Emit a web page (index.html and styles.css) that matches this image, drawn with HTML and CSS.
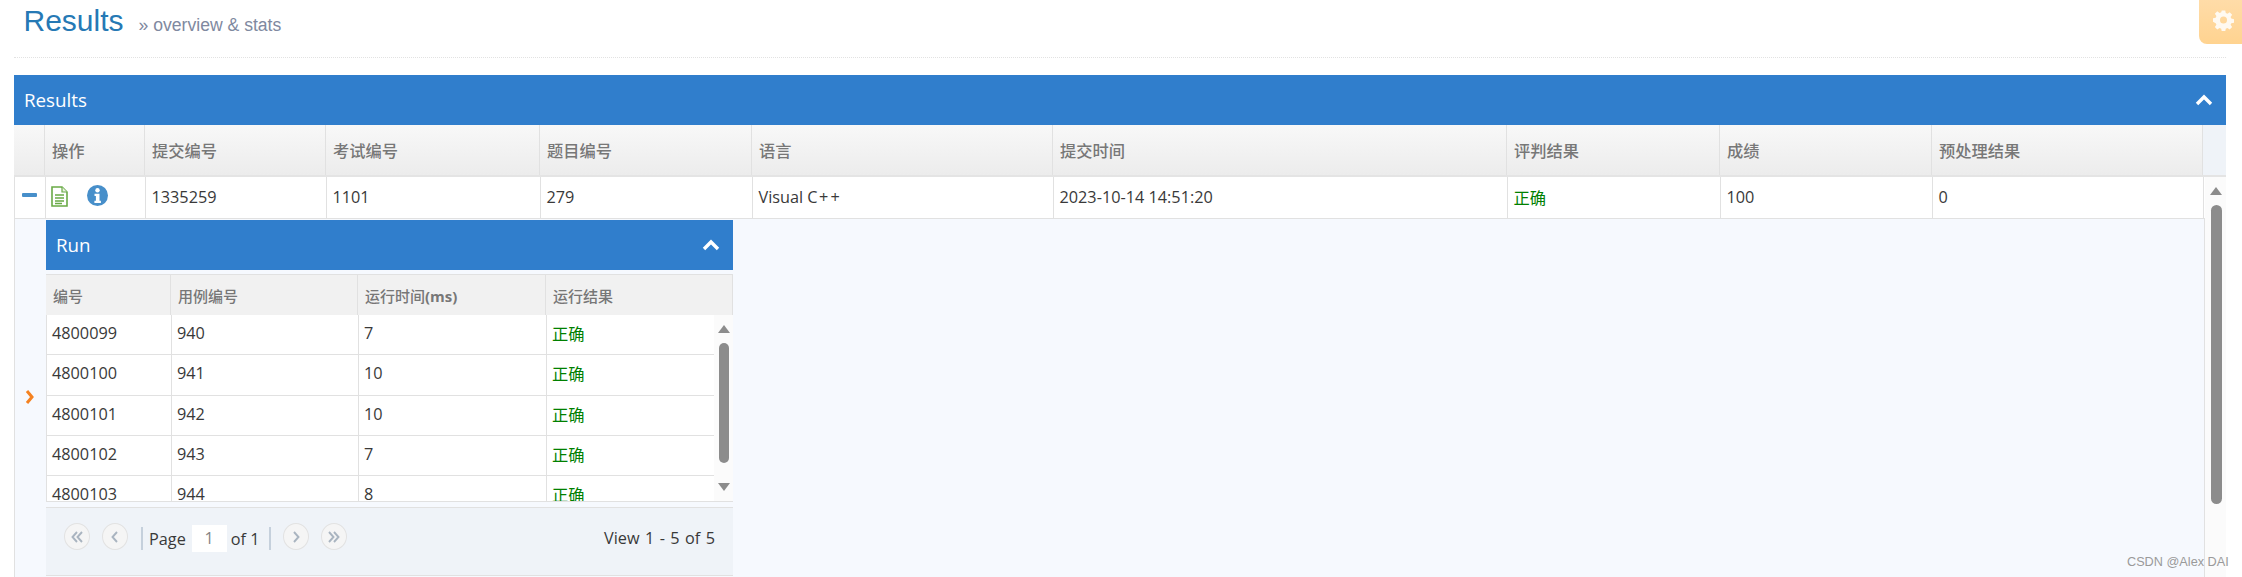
FILE: index.html
```html
<!DOCTYPE html>
<html lang="zh">
<head>
<meta charset="utf-8">
<title>Results</title>
<link rel="stylesheet" href="styles.css">
</head>
<body>
<div class="page">
  <div class="page-header">
    <h1>Results</h1>
    <small>» overview &amp; stats</small>
  </div>
  <div class="widget">
    <div class="bar main-bar">
      <span>Results</span>
      <svg class="up" viewBox="0 0 18 12"><path d="M2 10 9 3l7 7" fill="none" stroke="#fff" stroke-width="3.4"/></svg>
    </div>
    <div class="grid-head main-cols">
      <div></div><div>操作</div><div>提交编号</div><div>考试编号</div><div>题目编号</div><div>语言</div><div>提交时间</div><div>评判结果</div><div>成绩</div><div>预处理结果</div><div></div>
    </div>
    <div class="main-body">
      <div class="main-rows">
        <div class="grid-row body-cols">
          <div class="toggle"><span class="minus"></span></div>
          <div class="actions">
            <svg class="file" viewBox="0 0 17 21"><path d="M1 1h10l5 5v14H1z" fill="#fff" stroke="#69aa46" stroke-width="1.6"/><path d="M11 1v5h5" fill="#e8f3df" stroke="#69aa46" stroke-width="1.2"/><path d="M4 9h9M4 12h9M4 15h9M4 17.5h7" stroke="#69aa46" stroke-width="1.5"/></svg>
            <svg class="info" viewBox="0 0 21 21"><circle cx="10.5" cy="10.5" r="10.5" fill="#478fca"/><circle cx="10.5" cy="5.2" r="2.2" fill="#fff"/><path d="M7.5 8.7h5v7h1.4v2.2H7.4v-2.2h1.5v-4.8H7.5z" fill="#fff"/></svg>
          </div>
          <div>1335259</div><div>1101</div><div>279</div><div>Visual C<span class="pp">++</span></div><div>2023-10-14 14:51:20</div><div class="ok">正确</div><div>100</div><div>0</div>
        </div>
        <div class="expanded">
          <div class="marker">
            <svg viewBox="0 0 10 16"><path d="M2 2l5 6-5 6" fill="none" stroke="#f58220" stroke-width="3"/></svg>
          </div>
          <div class="detail">
            <div class="bar sub-bar">
              <span>Run</span>
              <svg class="up" viewBox="0 0 18 12"><path d="M2 10 9 3l7 7" fill="none" stroke="#fff" stroke-width="3.4"/></svg>
            </div>
            <div class="grid-head sub-head sub-head-cols">
              <div>编号</div><div>用例编号</div><div><span>运行时间<b class="unit">(ms)</b></span></div><div>运行结果</div>
            </div>
            <div class="sub-body">
              <div class="sub-rows">
                <div class="grid-row sub-row sub-cols"><div>4800099</div><div>940</div><div>7</div><div class="ok">正确</div></div>
                <div class="grid-row sub-row sub-cols"><div>4800100</div><div>941</div><div>10</div><div class="ok">正确</div></div>
                <div class="grid-row sub-row sub-cols"><div>4800101</div><div>942</div><div>10</div><div class="ok">正确</div></div>
                <div class="grid-row sub-row sub-cols"><div>4800102</div><div>943</div><div>7</div><div class="ok">正确</div></div>
                <div class="grid-row sub-row sub-cols"><div>4800103</div><div>944</div><div>8</div><div class="ok">正确</div></div>
              </div>
              <div class="scroll sub-scroll">
                <i class="arrow-up"></i><i class="thumb"></i><i class="arrow-down"></i>
              </div>
            </div>
            <div class="pager">
              <div class="pager-left">
                <button class="pg" type="button"><svg viewBox="0 0 14 14"><path d="M7 2 2.500 7 7 12M12 2 7.500 7 12 12" fill="none" stroke="#a9b4c0" stroke-width="1.9"/></svg></button>
                <button class="pg" type="button"><svg viewBox="0 0 14 14"><path d="M9 2 4.500 7 9 12" fill="none" stroke="#a9b4c0" stroke-width="1.9"/></svg></button>
                <span class="sep"></span>
                <span class="pg-label">Page</span>
                <span class="pg-input">1</span>
                <span class="pg-label">of 1</span>
                <span class="sep sep-r"></span>
                <button class="pg" type="button"><svg viewBox="0 0 14 14"><path d="M5 2l4.500 5L5 12" fill="none" stroke="#a9b4c0" stroke-width="1.9"/></svg></button>
                <button class="pg" type="button"><svg viewBox="0 0 14 14"><path d="M2 2l4.500 5L2 12M7 2l4.500 5L7 12" fill="none" stroke="#a9b4c0" stroke-width="1.9"/></svg></button>
              </div>
              <div class="pager-right">View 1 - 5 of 5</div>
            </div>
          </div>
        </div>
      </div>
      <div class="scroll main-scroll">
        <i class="arrow-up"></i><i class="thumb"></i>
      </div>
    </div>
  </div>
</div>
<div class="settings">
  <svg viewBox="0 0 24 24"><path fill="#fff" fill-opacity=".85" fill-rule="evenodd" d="M10 1h4l.6 3.100 1.900.8 2.600-1.800 2.800 2.800-1.800 2.600.8 1.900 3.100.6v4l-3.100.6-.8 1.900 1.800 2.600-2.800 2.800-2.600-1.800-1.900.8-.6 3.100h-4l-.6-3.100-1.900-.8-2.600 1.800-2.800-2.800 1.800-2.600-.8-1.900L0 14v-4l3.100-.6.8-1.900L2.100 4.900l2.800-2.800 2.600 1.800 1.900-.8zM12 8a4 4 0 1 0 0 8 4 4 0 0 0 0-8z"/></svg>
</div>
<div class="watermark">CSDN @Alex DAI</div>
</body>
</html>
```
FILE: styles.css
```css
* { box-sizing: border-box; }
html, body { margin: 0; height: 577px; overflow: hidden; background: #fff; }
body {
  font-family: "Open Sans", "Noto Sans CJK SC", sans-serif;
  font-size: 16.25px;
  color: #393939;
  position: relative;
}
.page { padding: 0 16px 0 14px; }
.page-header {
  height: 58px;
  margin-bottom: 17px;
  padding: 0 0 0 9.5px;
  border-bottom: 1px dotted #e2e2e2;
  display: flex;
  align-items: baseline;
  font-family: "Liberation Sans", Arial, sans-serif;
}
h1 {
  margin: 0;
  font-size: 30px;
  font-weight: 400;
  line-height: 41px;
  color: #2679b5;
}
small {
  margin-left: 15px;
  font-size: 17.6px;
  color: #8089a0;
}
.bar {
  background: #307ecc;
  color: #fff;
  height: 50px;
  font-size: 18.75px;
  display: flex;
  align-items: center;
  justify-content: space-between;
  flex: none;
}
.bar span { margin-top: -2px; }
.main-bar { padding: 0 13px 0 10px; }
.sub-bar { padding: 0 13px 0 10px; }
.up { width: 18px; height: 12px; }
.grid-head { display: grid; color: #777; font-weight: 500; }
.unit { font-weight: 700; }
.main-cols {
  grid-template-columns: 31px 100px 181px 214px 212px 301px 454px 213px 212px 271px 23px;
  height: 52px;
  background: linear-gradient(#f8f8f8, #ececec);
  border-bottom: 2px solid #e4e4e4;
}
.main-cols > div {
  border-right: 1px solid #e1e1e1;
  padding-left: 7px;
  display: flex;
  align-items: center;
}
.main-cols > div:last-child { border-right: 0; background: #eff3f8; }
.body-cols { grid-template-columns: 32px 100px 181px 214px 212px 301px 454px 213px 212px 271px; }
.grid-row { display: grid; }
.body-cols { height: 42px; border-bottom: 1px solid #e1e1e1; }
.body-cols > div {
  border-right: 1px solid #e1e1e1;
  padding: 0 0 2px 5.5px;
  display: flex;
  align-items: center;
}
.body-cols > div:first-child { border-left: 1px solid #e1e1e1; }
.pp { letter-spacing: 2px; margin-left: 1.5px; }
.main-body { display: flex; align-items: stretch; height: 400px; }
.main-rows { width: 2191px; }
.body-cols .toggle { padding-left: 7px; align-items: flex-start; }
.minus { width: 15px; height: 4px; background: #478fca; border-radius: 1px; margin-top: 16px; }
.body-cols .actions { gap: 19px; padding-left: 5px; align-items: flex-start; padding-top: 9px; }
.file { width: 17px; height: 21px; }
.info { width: 21px; height: 21px; margin-top: -1px; }
.ok { color: #008000; }
.expanded {
  display: flex;
  height: 358px;
  padding-top: 1px;
  overflow: hidden;
  background: #f6f9fe;
  border-left: 1px solid #e1e1e1;
  border-right: 1px solid #e1e1e1;
}
.marker { width: 31px; display: flex; align-items: center; justify-content: center; padding: 0 2px 4px 0; }
.marker svg { width: 10px; height: 16px; }
.detail { width: 687px; display: flex; flex-direction: column; flex: none; }
.sub-head {
  margin-top: 4px;
  height: 41px;
  flex: none;
  background: #f1f1f1;
  font-size: 15px;
  border-top: 1px solid #e1e1e1;
}
.sub-head-cols { grid-template-columns: 125px 187px 188px 187px; }
.sub-head-cols > div {
  border-right: 1px solid #e1e1e1;
  padding-left: 7px;
  display: flex;
  align-items: center;
}
.sub-body {
  display: flex;
  height: 187px;
  flex: none;
  background: #fff;
  border-bottom: 1px solid #e1e1e1;
  overflow: hidden;
}
.sub-rows { width: 668px; flex: none; }
.sub-cols { grid-template-columns: 126px 187px 188px 167px; }
.sub-row { height: 40.25px; border-bottom: 1px solid #e1e1e1; }
.sub-row > div {
  border-right: 1px solid #e1e1e1;
  padding: 0 0 3px 5px;
  display: flex;
  align-items: center;
}
.sub-row > div:last-child { border-right: 0; }
.sub-row > div:first-child { border-left: 1px solid #e1e1e1; }
.scroll { background: #fbfbfb; display: flex; flex-direction: column; align-items: center; }
.sub-scroll { width: 19px; height: 186px; padding-top: 10px; }
.main-scroll { width: 21px; padding: 10px 0 0 1px; }
.arrow-up { width: 0; height: 0; border: 6px solid transparent; border-top: 0; border-bottom: 8px solid #8c8c8c; }
.arrow-down { width: 0; height: 0; border: 6px solid transparent; border-bottom: 0; border-top: 8px solid #8c8c8c; margin-top: 20px; }
.thumb { width: 11px; background: #8c8c8c; border-radius: 6px; }
.sub-scroll .thumb { margin-top: 10px; height: 120px; width: 10px; }
.main-scroll .thumb { margin-top: 10px; height: 299px; }
.pager {
  margin-top: 5px;
  height: 69px;
  flex: none;
  background: #eff3f8;
  border-top: 1px solid #e1e1e1;
  border-bottom: 1px solid #e1e1e1;
  display: flex;
  justify-content: space-between;
  padding: 15px 18px 0 18px;
}
.pager-left { display: flex; align-items: flex-start; }
.pg {
  width: 26px;
  height: 27px;
  padding: 0;
  margin-right: 12px;
  border: 1px solid #e2e2e2;
  border-radius: 50%;
  background: #f5f5f5;
  display: flex;
  align-items: center;
  justify-content: center;
}
.pg svg { width: 14px; height: 14px; }
.sep { width: 2px; height: 23px; background: #c5d0dc; margin: 4px 6px 0 1px; }
.sep-r { margin: 4px 12px 0 9px; }
.pg-label { line-height: 27px; margin-top: 3px; }
.pg-input {
  width: 35px;
  height: 27px;
  margin: 2px 4px 0 6px;
  background: #fff;
  color: #858585;
  text-align: center;
  line-height: 27px;
}
.pager-right { line-height: 27px; margin-top: 2px; word-spacing: 1.2px; }
.settings {
  position: absolute;
  top: 0;
  right: 0;
  width: 43px;
  height: 44px;
  background: linear-gradient(#ffdca8, #ffd390);
  border-radius: 0 0 0 8px;
  display: flex;
  align-items: center;
  justify-content: center;
  padding: 0 0 4px 6px;
}
.settings svg { width: 21px; height: 22px; }
.watermark {
  position: absolute;
  left: 2127px;
  top: 554px;
  font-family: "Liberation Sans", sans-serif;
  font-size: 12.7px;
  color: #9a9a9a;
  line-height: 16px;
}
```
